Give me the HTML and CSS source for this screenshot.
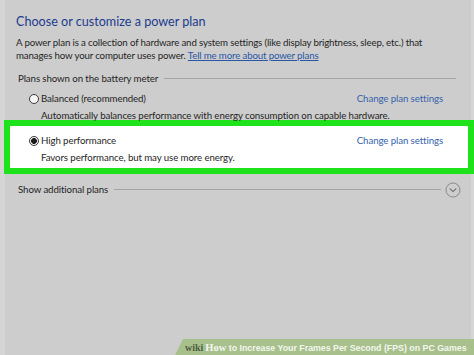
FILE: index.html
```html
<!DOCTYPE html>
<html lang="en">

<head>
    <meta charset="utf-8">
    <title>Choose or customize a power plan</title>
    <link rel="stylesheet" href="styles.css">
</head>

<body>

    <div class="panel">
        <h1 class="title">Choose or customize a power plan</h1>
        <p class="desc">A power plan is a collection of hardware and system settings (like display brightness, sleep, etc.) that<br>manages how your computer uses power. <a href="#">Tell me more about power plans</a></p>

        <div class="group-head">
            <span>Plans shown on the battery meter</span>
            <div class="rule"></div>
        </div>

        <div class="plan">
            <div class="plan-row">
                <span class="radio"></span>
                <span class="plan-name">Balanced (recommended)</span>
                <a class="change" href="#">Change plan settings</a>
            </div>
            <p class="plan-desc">Automatically balances performance with energy consumption on capable hardware.</p>
        </div>

        <div class="plan valgt">
            <div class="plan-row">
                <span class="radio checked"></span>
                <span class="plan-name">High performance</span>
                <a class="change" href="#">Change plan settings</a>
            </div>
            <p class="plan-desc">Favors performance, but may use more energy.</p>
        </div>

        <div class="group-head more">
            <span>Show additional plans</span>
            <div class="rule"></div>
            <svg class="expand" width="16" height="16" viewBox="0 0 16 16">
                <circle cx="8" cy="8" r="7" fill="none" stroke="#8a8a8a" stroke-width="1"/>
                <path d="M4.8 6.6 L8 9.6 L11.2 6.6" fill="none" stroke="#6a6a6a" stroke-width="1.1"/>
            </svg>
        </div>
    </div>

    <div class="banner">
        <span class="wiki">wiki</span><span class="how">How</span> to Increase Your Frames Per Second (FPS) on PC Games
    </div>

</body>

</html>
```

FILE: styles.css
```css
body {
    margin: 0;
    width: 474px;
    height: 355px;
    overflow: hidden;
    background: linear-gradient(to right, #d5d5d5 0 5px, #cdcdcd 5px 471px, #d6d6d6 471px);
    font-family: Lato, sans-serif;
    color: #1f1f1f;
    position: relative;
}

.panel {
    padding-top: 14px;
}

.title {
    margin: 0 0 0 16px;
    font-size: 12.6px;
    line-height: 16px;
    font-weight: 400;
    color: #1c3c8e;
}

.desc {
    margin: 6px 0 0 16px;
    font-size: 9.7px;
    line-height: 13px;
    letter-spacing: -0.15px;
}

.desc a {
    color: #2a56a6;
    text-decoration: underline;
}

.group-head {
    display: flex;
    align-items: center;
    margin: 10px 18px 0 18px;
    font-size: 9.7px;
    line-height: 13px;
    letter-spacing: -0.1px;
}

.rule {
    flex: 1;
    height: 1px;
    background-color: #a4a4a4;
    margin-left: 6px;
}

.plan {
    padding: 7px 31px 0 29px;
}

.plan.valgt {
    background-color: #ffffff;
    border: 6px solid #1fe31a;
    margin: -2px 0 0 4px;
    padding: 8.5px 25px 4px 19px;
}

.plan-row {
    display: flex;
    align-items: center;
    font-size: 9.7px;
    line-height: 13px;
    letter-spacing: -0.1px;
}

.radio {
    width: 10px;
    height: 10px;
    border: 1px solid #3a3a3a;
    border-radius: 50%;
    margin-right: 2px;
    box-sizing: border-box;
    background-color: #f6f6f6;
}

.radio.checked {
    background: radial-gradient(circle, #1a1a1a 0 2.6px, #f6f6f6 3.2px);
}

.plan-name {
    flex: 1;
}

.change {
    color: #3563ab;
    text-decoration: none;
}

.plan-desc {
    margin: 3.5px 0 0 12px;
    font-size: 9.7px;
    line-height: 13px;
    letter-spacing: -0.1px;
}

.more {
    margin-top: 8px;
    margin-right: 13px;
}

.more .rule {
    margin-right: 4px;
}

.banner {
    position: absolute;
    right: 0;
    bottom: 0;
    width: 299px;
    height: 16px;
    background-color: #a7c08c;
    clip-path: polygon(8px 0, 100% 0, 100% 100%, 0 100%);
    color: #f4f7ef;
    font-family: "Liberation Sans", sans-serif;
    font-size: 8.8px;
    font-weight: 700;
    line-height: 17px;
    padding-left: 10px;
    box-sizing: border-box;
    white-space: nowrap;
}

.wiki {
    color: #4f5f42;
    font-family: "Liberation Serif", serif;
    font-size: 10px;
}

.how {
    font-family: "Liberation Serif", serif;
    font-size: 10.5px;
    margin-left: 2px;
}
```
